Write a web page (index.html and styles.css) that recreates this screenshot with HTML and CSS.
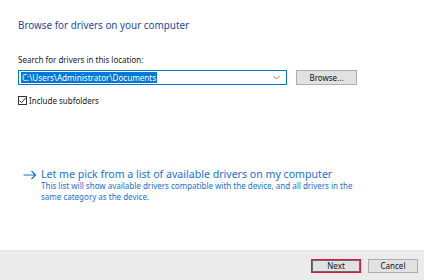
FILE: index.html
```html
<!DOCTYPE html>
<html>
<head>
<meta charset="utf-8">
<link rel="stylesheet" href="styles.css">
</head>
<body>
<div class="dialog">
  <main class="content">
    <h1 class="title">Browse for drivers on your computer</h1>
    <label class="field-label">Search for drivers in this location:</label>
    <div class="path-row">
      <div class="combo">
        <span class="combo-text"><span class="selected">C:\Users\Administrator\Documents</span></span>
        <svg class="chev" width="7" height="5" viewBox="0 0 7 5"><path d="M0.5 1 L3.5 4 L6.5 1" fill="none" stroke="#8a8a8a" stroke-width="1"/></svg>
      </div>
      <button class="btn browse">Browse...</button>
    </div>
    <div class="check-row">
      <span class="checkbox"><svg width="9" height="9" viewBox="0 0 9 9"><path d="M1.5 4.5 L3.6 6.6 L7.6 2" fill="none" stroke="#333" stroke-width="1"/></svg></span>
      <span class="check-label">Include subfolders</span>
    </div>
    <div class="link-block">
      <svg class="arrow" width="14" height="10" viewBox="0 0 14 10"><path d="M0.5 5 H12.5 M8.5 1 L12.5 5 L8.5 9" fill="none" stroke="#1a6fd6" stroke-width="1.2"/></svg>
      <div class="link-text">
        <div class="link-title">Let me pick from a list of available drivers on my computer</div>
        <div class="link-desc">This list will show available drivers compatible with the device, and all drivers in the same category as the device.</div>
      </div>
    </div>
  </main>
  <footer class="footer">
    <button class="btn next">Next</button>
    <button class="btn cancel">Cancel</button>
  </footer>
</div>
</body>
</html>
```

FILE: styles.css
```css
* { box-sizing: border-box; }
html, body { margin: 0; padding: 0; }
body {
  width: 424px;
  height: 280px;
  background: #ffffff;
  font-family: "Noto Sans", "Open Sans", sans-serif;
  overflow: hidden;
}
.dialog {
  display: flex;
  flex-direction: column;
  height: 280px;
}
.content {
  flex: 1;
  padding: 18px 0 0 18px;
  display: flex;
  flex-direction: column;
}
.title {
  margin: 0;
  font-weight: 400;
  font-size: 9.9px;
  line-height: 14px;
  color: #1f45a3;
}
.field-label {
  margin-top: 22px;
  font-size: 8px;
  line-height: 11px;
  color: #1a1a1a;
}
.path-row {
  margin-top: 5px;
  display: flex;
  align-items: center;
  gap: 9px;
}
.combo {
  width: 269px;
  height: 15px;
  border: 1px solid #0078d7;
  display: flex;
  align-items: center;
  justify-content: space-between;
  padding: 0 6px 0 2px;
  background: #fff;
}
.combo-text {
  font-size: 8.1px;
  line-height: 11px;
  display: flex;
}
.selected {
  background: #0078d7;
  color: #fff;
  padding: 0 1px;
}
.chev { display: block; }
.btn {
  font-family: "Noto Sans", "Open Sans", sans-serif;
  font-size: 8px;
  color: #111;
  background: #e1e1e1;
  border: 1px solid #adadad;
  padding: 0;
  height: 15px;
  line-height: 11px;
}
.browse { width: 61px; }
.check-row {
  margin-top: 10px;
  display: flex;
  align-items: center;
  gap: 2px;
}
.checkbox {
  width: 9px;
  height: 9px;
  border: 1px solid #333;
  position: relative;
}
.checkbox svg { position: absolute; left: -1px; top: -1px; }
.check-label {
  font-size: 8px;
  line-height: 11px;
  color: #1a1a1a;
}
.link-block {
  margin-top: 62px;
  margin-left: 5px;
  display: flex;
  align-items: flex-start;
  gap: 4px;
}
.arrow { margin-top: 2px; display: block; }
.link-title {
  font-size: 10.6px;
  line-height: 13px;
  color: #1a6fd6;
}
.link-desc {
  font-size: 8px;
  line-height: 10.5px;
  color: #1a6fd6;
  width: 318px;
}
.footer {
  height: 30px;
  background: #ebebeb;
  border-top: 1px solid #e2e2e2;
  display: flex;
  justify-content: flex-end;
  align-items: center;
  gap: 7px;
  padding: 0 6px 0 0;
}
.next, .cancel {
  width: 50px;
  height: 14px;
}
.next {
  border: 1px solid #e0143c;
  box-shadow: inset 0 0 0 1px #6b6b6b;
}
```
